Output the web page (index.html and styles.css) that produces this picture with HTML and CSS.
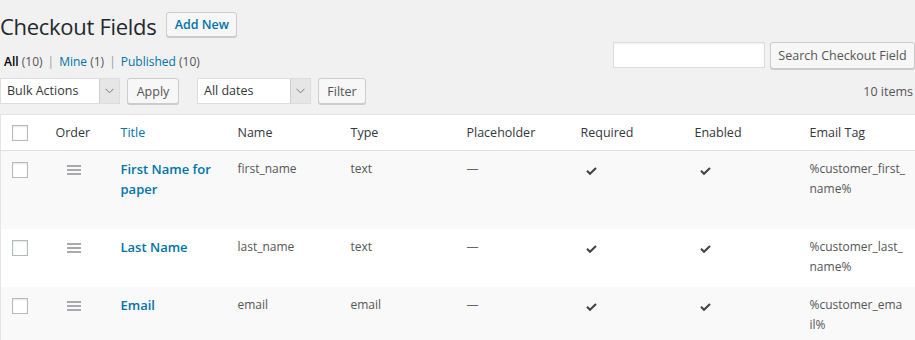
FILE: index.html
```html
<!DOCTYPE html>
<html>
<head>
<meta charset="utf-8">
<link rel="stylesheet" href="styles.css">
</head>
<body>
<div class="wrap">
  <div class="heading">
    <h1 class="page-title">Checkout Fields</h1>
    <a class="btn btn-add">Add New</a>
  </div>
  <div class="top-row">
    <ul class="subsubsub">
      <li><b class="current">All</b> <span class="count">(10)</span></li>
      <li class="sep">|</li>
      <li><a>Mine</a> <span class="count">(1)</span></li>
      <li class="sep">|</li>
      <li><a>Published</a> <span class="count">(10)</span></li>
    </ul>
    <div class="search-box">
      <span class="input"></span>
      <span class="btn btn-search">Search Checkout Field</span>
    </div>
  </div>
  <div class="tablenav">
    <div class="select sel-bulk"><span class="sel-label">Bulk Actions</span><span class="sel-arrow"><svg width="9" height="6" viewBox="0 0 9 6"><polyline points="0.5,0.8 4.5,4.8 8.5,0.8" fill="none" stroke="#777" stroke-width="1"/></svg></span></div>
    <span class="btn btn-apply">Apply</span>
    <div class="select sel-dates"><span class="sel-label">All dates</span><span class="sel-arrow"><svg width="9" height="6" viewBox="0 0 9 6"><polyline points="0.5,0.8 4.5,4.8 8.5,0.8" fill="none" stroke="#777" stroke-width="1"/></svg></span></div>
    <span class="btn btn-filter">Filter</span>
    <span class="items">10 items</span>
  </div>
  <table class="list">
    <colgroup>
      <col class="c-check"><col class="c-order"><col class="c-title"><col class="c-name"><col class="c-type"><col class="c-ph"><col class="c-req"><col class="c-en"><col class="c-tag">
    </colgroup>
    <thead>
      <tr>
        <th class="check"><span class="cb"></span></th>
        <th>Order</th>
        <th><a class="sort">Title</a></th>
        <th>Name</th>
        <th>Type</th>
        <th>Placeholder</th>
        <th>Required</th>
        <th>Enabled</th>
        <th>Email Tag</th>
      </tr>
    </thead>
    <tbody>
      <tr class="alt">
        <td class="check"><span class="cb"></span></td>
        <td><span class="drag"><svg width="14" height="12" viewBox="0 0 14 12"><path d="M0 2h14M0 6h14M0 10h14" stroke="#8c8f94" stroke-width="1.6"/></svg></span></td>
        <td><a class="row-title">First Name for paper</a><div class="row-actions">Edit</div></td>
        <td>first_name</td>
        <td>text</td>
        <td class="dash">—</td>
        <td><svg class="tick" width="11" height="8" viewBox="0 0 11 8"><polyline points="1,3.8 4,6.8 10,1" fill="none" stroke="#444" stroke-width="2.1"/></svg></td>
        <td><svg class="tick" width="11" height="8" viewBox="0 0 11 8"><polyline points="1,3.8 4,6.8 10,1" fill="none" stroke="#444" stroke-width="2.1"/></svg></td>
        <td class="tag">%customer_first_<wbr>name%</td>
      </tr>
      <tr>
        <td class="check"><span class="cb"></span></td>
        <td><span class="drag"><svg width="14" height="12" viewBox="0 0 14 12"><path d="M0 2h14M0 6h14M0 10h14" stroke="#8c8f94" stroke-width="1.6"/></svg></span></td>
        <td><a class="row-title">Last Name</a><div class="row-actions">Edit</div></td>
        <td>last_name</td>
        <td>text</td>
        <td class="dash">—</td>
        <td><svg class="tick" width="11" height="8" viewBox="0 0 11 8"><polyline points="1,3.8 4,6.8 10,1" fill="none" stroke="#444" stroke-width="2.1"/></svg></td>
        <td><svg class="tick" width="11" height="8" viewBox="0 0 11 8"><polyline points="1,3.8 4,6.8 10,1" fill="none" stroke="#444" stroke-width="2.1"/></svg></td>
        <td class="tag">%customer_last_<wbr>name%</td>
      </tr>
      <tr class="alt">
        <td class="check"><span class="cb"></span></td>
        <td><span class="drag"><svg width="14" height="12" viewBox="0 0 14 12"><path d="M0 2h14M0 6h14M0 10h14" stroke="#8c8f94" stroke-width="1.6"/></svg></span></td>
        <td><a class="row-title">Email</a><div class="row-actions">Edit</div></td>
        <td>email</td>
        <td>email</td>
        <td class="dash">—</td>
        <td><svg class="tick" width="11" height="8" viewBox="0 0 11 8"><polyline points="1,3.8 4,6.8 10,1" fill="none" stroke="#444" stroke-width="2.1"/></svg></td>
        <td><svg class="tick" width="11" height="8" viewBox="0 0 11 8"><polyline points="1,3.8 4,6.8 10,1" fill="none" stroke="#444" stroke-width="2.1"/></svg></td>
        <td class="tag">%customer_ema<wbr>il%</td>
      </tr>
    </tbody>
  </table>
</div>
</body>
</html>
```

FILE: styles.css
```css
* { box-sizing: border-box; }
html, body { margin: 0; padding: 0; }
body {
  background: #f1f1f1;
  font-family: "Open Sans", "Noto Sans", sans-serif;
  font-size: 12px;
  color: #444;
  width: 915px;
  overflow: hidden;
}
a { color: #0073aa; text-decoration: none; }

.heading {
  display: flex;
  align-items: center;
  margin-top: 11px;
  height: 26px;
}
.page-title {
  margin: 0;
  padding-top: 3px;
  font-size: 22px;
  letter-spacing: -0.3px;
  font-weight: 400;
  line-height: 26px;
  color: #23282d;
}
.btn {
  display: inline-flex;
  align-items: center;
  justify-content: center;
  height: 26px;
  padding: 0 10px;
  background: #f7f7f7;
  border: 1px solid #ccc;
  border-radius: 3px;
  box-shadow: 0 1px 0 #ccc;
  color: #555;
  font-size: 12.5px;
  white-space: nowrap;
}
.btn-add {
  margin-left: 10px;
  height: 25px;
  width: 71px;
  padding: 0;
  color: #0073aa;
  font-weight: 600;
  font-size: 12.5px;
}

.top-row {
  display: flex;
  justify-content: space-between;
  align-items: flex-start;
  margin-top: 5px;
}
.subsubsub {
  list-style: none;
  margin: 12px 0 0 4px;
  padding: 0;
  display: flex;
  gap: 5px;
  line-height: 16px;
  font-size: 12px;
  color: #666;
}
.subsubsub .current { color: #000; font-weight: 600; }
.subsubsub .count { color: #555; }
.subsubsub .sep { color: #999; }

.search-box {
  display: flex;
  gap: 5px;
}
.search-box .input {
  width: 152px;
  height: 26px;
  background: #fff;
  border: 1px solid #ddd;
  box-shadow: inset 0 1px 2px rgba(0,0,0,.07);
}
.btn-search { width: 145px; height: 27px; padding: 0; }

.tablenav {
  display: flex;
  align-items: center;
  margin-top: 8px;
  height: 26px;
}
.select {
  display: flex;
  height: 26px;
  background: #fff;
  border: 1px solid #ddd;
  color: #32373c;
  font-size: 12.5px;
}
.sel-label { flex: 1; padding-left: 6px; line-height: 24px; }
.sel-arrow {
  width: 20px;
  background: #e6e6e6;
  border-left: 1px solid #ccc;
  display: flex;
  align-items: center;
  justify-content: center;
}
.sel-bulk { width: 120px; }
.btn-apply { margin-left: 7px; width: 52px; padding: 0; }
.sel-dates { width: 114px; margin-left: 18px; }
.btn-filter { margin-left: 7px; width: 48px; padding: 0; }
.items { margin-left: auto; margin-right: 2px; color: #555; font-size: 12.5px; }

.list {
  margin-top: 10px;
  width: 915px;
  table-layout: fixed;
  border-collapse: collapse;
  background: #fff;
  border-top: 1px solid #e5e5e5;
  border-left: 1px solid #e5e5e5;
}
.c-check { width: 45px; }
.c-order { width: 65px; }
.c-title { width: 117px; }
.c-name { width: 113px; }
.c-type { width: 116px; }
.c-ph { width: 114px; }
.c-req { width: 114px; }
.c-en { width: 115px; }
.c-tag { width: 116px; }

th, td {
  text-align: left;
  vertical-align: top;
  padding: 8px 10px;
  font-weight: 400;
}
th {
  line-height: 19px;
  color: #32373c;
  border-bottom: 1px solid #e1e1e1;
  height: 36px;
  font-size: 12.5px;
}
td {
  line-height: 20px;
  color: #555;
}
th.check, td.check { padding: 10px 0 0 11px; }
td.check { padding-top: 11px; }
.cb {
  display: block;
  width: 16px;
  height: 16px;
  background: #fff;
  border: 1px solid #b4b9be;
  box-shadow: inset 0 1px 2px rgba(0,0,0,.1);
}
tr.alt { background: #f9f9f9; }
.drag { display: block; margin: 5px 0 0 11px; height: 12px; }
.drag svg { display: block; }
.row-title {
  display: block;
  font-size: 13px;
  font-weight: 600;
  line-height: 20px;
}
.row-actions { visibility: hidden; padding-top: 2px; }
.dash { color: #666; }
.tick { display: block; margin: 8px 0 0 5px; }
.tag { padding-right: 4px; }
```
